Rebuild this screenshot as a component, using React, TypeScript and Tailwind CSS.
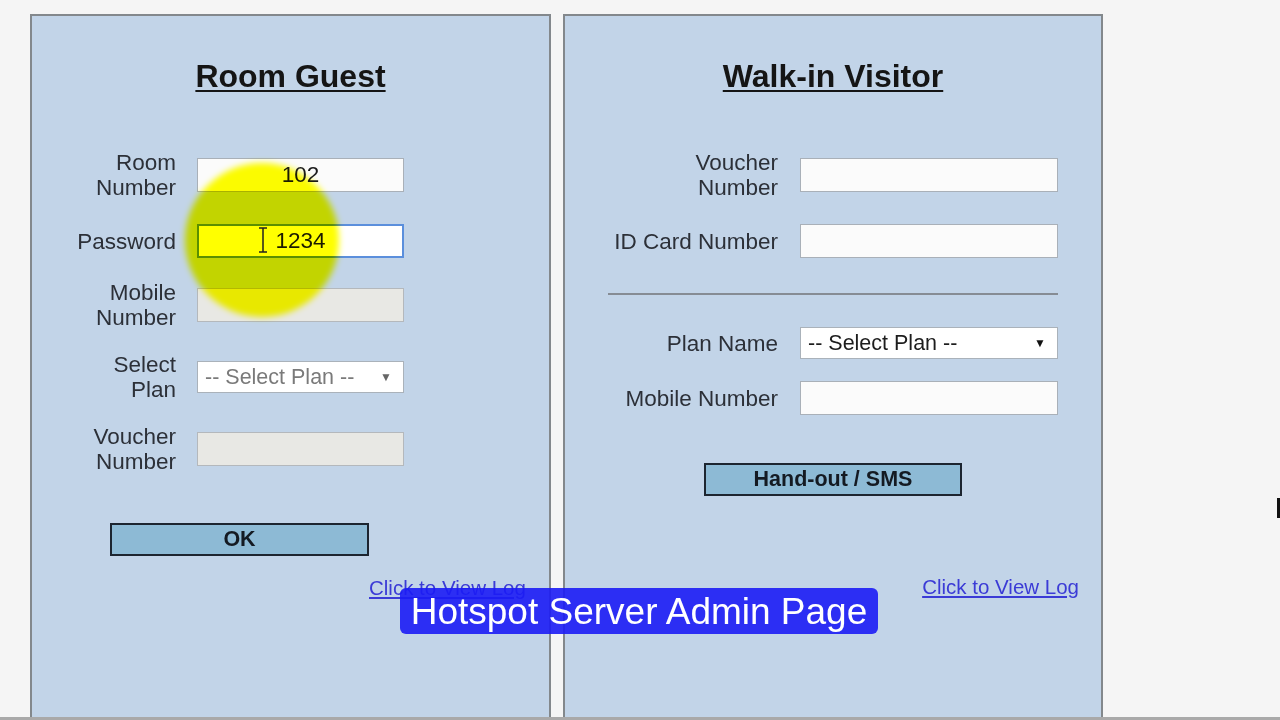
import React from 'react';

const font = "font-['Liberation_Sans',Arial,Helvetica,sans-serif]";

type RowProps = {
    label: React.ReactNode;
    labelWidth: string;
    gap: string;
    children: React.ReactNode;
    className?: string;
};

const Row = ({ label, labelWidth, gap, children, className = '' }: RowProps) => (
    <div className={`flex items-center h-[52px] ${className}`}>
        <div className={`${labelWidth} text-right text-[22.5px] leading-[25px] text-[#2c3038]`}>{label}</div>
        <div className={gap}>{children}</div>
    </div>
);

const TextBox = ({ value = '', width, disabled = false, focused = false }: { value?: string; width: string; disabled?: boolean; focused?: boolean }) => (
    <div
        className={`${width} h-[34px] flex items-center justify-center text-[22.5px] text-[#1b1b1b] ${
            disabled
                ? 'bg-[#e8e8e4] border border-[#b4b8bc]'
                : focused
                ? 'bg-white border-2 border-[#5b8fdc]'
                : 'bg-[#fbfbfb] border border-[#a9b0b8]'
        }`}
    >
        {value}
    </div>
);

const SelectBox = ({ width, muted = false }: { width: string; muted?: boolean }) => (
    <div
        className={`${width} h-[32px] flex items-center justify-between bg-white border border-[#aab2ba] pl-[7px] pr-[11px] text-[21.5px] ${
            muted ? 'text-[#7a7a7a]' : 'text-[#1d1d1d]'
        }`}
    >
        <span>-- Select Plan --</span>
        <span className={`text-[12px] ${muted ? 'text-[#666]' : 'text-[#111]'}`}>▼</span>
    </div>
);

const ActionButton = ({ text, className }: { text: string; className: string }) => (
    <div
        className={`${className} h-[33px] flex items-center justify-center bg-[#8dbad5] border-2 border-[#1c2530] text-[21.5px] font-bold text-[#141a22]`}
    >
        {text}
    </div>
);

const LogLink = ({ className }: { className: string }) => (
    <div className={`${className} h-[24px] leading-[24px] text-[20.5px] text-[#3b3bd6] underline underline-offset-2`}>Click to View Log</div>
);

export default function App() {
    return (
        <div className={`relative w-[1280px] h-[720px] overflow-hidden bg-[#f5f5f5] ${font}`}>
            <div className="flex gap-[12px] pl-[30px] pt-[14px]">
                {/* Room guest panel */}
                <div className="w-[521px] h-[720px] bg-[#c2d4e8] border-2 border-[#83888c]">
                    <div className="mt-[42px] h-[36px] text-center text-[32px] leading-[36px] font-bold text-[#151515] underline decoration-2 underline-offset-[3px]">
                        Room Guest
                    </div>
                    <div className="mt-[55px]">
                        <Row label={<>Room<br />Number</>} labelWidth="w-[144px]" gap="ml-[21px]">
                            <TextBox value="102" width="w-[207px]" />
                        </Row>
                        <Row label="Password" labelWidth="w-[144px]" gap="ml-[21px]" className="mt-[14px]">
                            <TextBox value="1234" width="w-[207px]" focused />
                        </Row>
                        <Row label={<>Mobile<br />Number</>} labelWidth="w-[144px]" gap="ml-[21px]" className="mt-[12px]">
                            <TextBox width="w-[207px]" disabled />
                        </Row>
                        <Row label={<>Select<br />Plan</>} labelWidth="w-[144px]" gap="ml-[21px]" className="mt-[20px]">
                            <SelectBox width="w-[207px]" muted />
                        </Row>
                        <Row label={<>Voucher<br />Number</>} labelWidth="w-[144px]" gap="ml-[21px]" className="mt-[20px]">
                            <TextBox width="w-[207px]" disabled />
                        </Row>
                    </div>
                    <ActionButton text="OK" className="mt-[48px] ml-[78px] w-[259px]" />
                    <LogLink className="mt-[20px] ml-[337px]" />
                </div>

                {/* Walk-in visitor panel */}
                <div className="w-[540px] h-[720px] bg-[#c2d4e8] border-2 border-[#83888c]">
                    <div className="mt-[42px] h-[36px] text-center text-[32px] leading-[36px] font-bold text-[#151515] underline decoration-2 underline-offset-[3px]">
                        Walk-in Visitor
                    </div>
                    <div className="mt-[55px]">
                        <Row label={<>Voucher<br />Number</>} labelWidth="w-[213px]" gap="ml-[22px]">
                            <TextBox width="w-[258px]" />
                        </Row>
                        <Row label="ID Card Number" labelWidth="w-[213px]" gap="ml-[22px]" className="mt-[14px]">
                            <TextBox width="w-[258px]" />
                        </Row>
                    </div>
                    <div className="mt-[26px] ml-[43px] w-[450px] h-[2px] bg-[#868c94]" />
                    <Row label="Plan Name" labelWidth="w-[213px]" gap="ml-[22px]" className="mt-[22px]">
                        <SelectBox width="w-[258px]" />
                    </Row>
                    <Row label="Mobile Number" labelWidth="w-[213px]" gap="ml-[22px]" className="mt-[3px]">
                        <TextBox width="w-[258px]" />
                    </Row>
                    <ActionButton text="Hand-out / SMS" className="mt-[39px] mx-auto w-[258px]" />
                    <div className="flex justify-end pr-[22px]">
                        <LogLink className="mt-[79px]" />
                    </div>
                </div>
            </div>

            {/* cursor highlight */}
            <div className="absolute left-[185px] top-[163px] w-[154px] h-[154px] rounded-full bg-[#ffff00] mix-blend-multiply blur-[3px]" />
            {/* text cursor */}
            <svg className="absolute left-[258px] top-[227px]" width="10" height="26" viewBox="0 0 10 26">
                <path d="M1 1h8M5 1v24M1 25h8" stroke="#222" strokeWidth="1.5" fill="none" />
            </svg>

            {/* video caption */}
            <div className="absolute left-[400px] top-[588px] w-[478px] h-[46px] rounded-[6px] bg-[#1c1cf5]/90 flex items-center justify-center text-[37px] text-white leading-none">
                Hotspot Server Admin Page
            </div>

            <div className="absolute right-0 top-[498px] w-[3px] h-[20px] bg-[#111]" />
            <div className="absolute left-0 bottom-0 w-full h-[3px] bg-[#a9a9a9]" />
        </div>
    );
}
